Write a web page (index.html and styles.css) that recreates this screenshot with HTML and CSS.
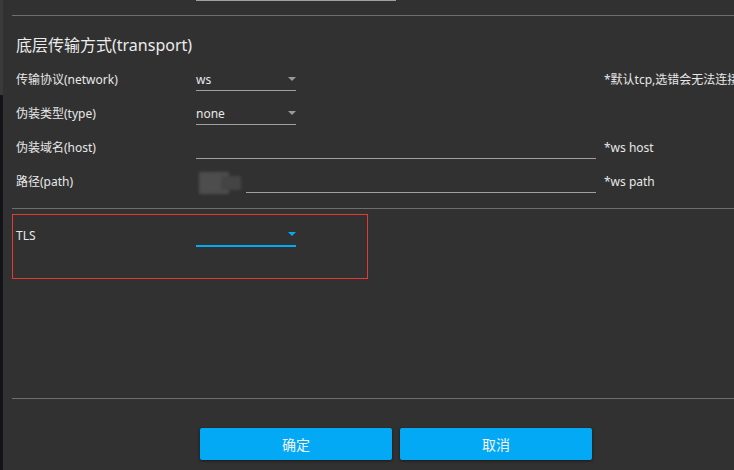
FILE: index.html
```html
<!DOCTYPE html>
<html lang="zh-CN">
<head>
<meta charset="utf-8">
<title>transport</title>
<link rel="stylesheet" href="styles.css">
</head>
<body>
<div class="page">
  <div class="bg-strip"><div class="bg-top"></div><div class="bg-bottom"></div></div>
  <main class="dialog">
    <div class="prev-input"></div>
    <hr class="sep sep-top">
    <h2 class="title">底层传输方式(transport)</h2>

    <div class="row">
      <span class="label">传输协议(network)</span>
      <div class="control">
        <div class="select"><span class="value">ws</span><span class="arrow"></span></div>
      </div>
      <span class="note">*默认tcp,选错会无法连接</span>
    </div>
    <div class="row">
      <span class="label">伪装类型(type)</span>
      <div class="control">
        <div class="select"><span class="value">none</span><span class="arrow"></span></div>
      </div>
    </div>
    <div class="row">
      <span class="label">伪装域名(host)</span>
      <div class="control">
        <div class="input wide"></div>
      </div>
      <span class="note">*ws host</span>
    </div>
    <div class="row">
      <span class="label">路径(path)</span>
      <div class="control">
        <div class="blur"><span class="b1"></span><span class="b2"></span></div>
        <div class="input narrow"></div>
      </div>
      <span class="note">*ws path</span>
    </div>

    <hr class="sep sep-mid">

    <div class="tls-box">
      <div class="row">
        <span class="label">TLS</span>
        <div class="select focused"><span class="value"></span><span class="arrow"></span></div>
      </div>
    </div>

    <hr class="sep sep-bottom">

    <div class="actions">
      <button class="btn">确定</button>
      <button class="btn">取消</button>
    </div>
  </main>
</div>
</body>
</html>
```
FILE: styles.css
```css
html, body {
  margin: 0;
  padding: 0;
  background: #313131;
  overflow: hidden;
}
body {
  width: 734px;
  height: 470px;
  font-family: "Noto Sans", "Noto Sans CJK SC", sans-serif;
  color: #e8e8e8;
  font-size: 12px;
}
.page {
  display: flex;
  height: 470px;
}
.bg-strip {
  width: 3px;
  display: flex;
  flex-direction: column;
  flex-shrink: 0;
}
.bg-top {
  height: 95px;
  background: #3a3a3a;
}
.bg-bottom {
  flex: 1;
  background: #121418;
}
.dialog {
  flex: 1;
  padding-left: 9px;
  min-width: 0;
}
.prev-input {
  margin-left: 184px;
  width: 200px;
  height: 1px;
  background: #a0a0a0;
}
.sep {
  border: 0;
  height: 1px;
  background: #6e6e6e;
  margin: 0;
}
.sep-top { margin-top: 14px; }
.sep-mid { margin-top: 5px; }
.sep-bottom { margin-top: 119px; }
.title {
  margin: 17px 0 10px 4px;
  font-size: 16px;
  font-weight: normal;
  line-height: 24px;
  color: #ececec;
}
.row {
  display: flex;
  align-items: flex-start;
  height: 34px;
  padding-left: 4px;
  white-space: nowrap;
}
.label {
  width: 180px;
  flex-shrink: 0;
  line-height: 24px;
  padding-top: 1px;
}
.control {
  width: 400px;
  flex-shrink: 0;
  display: flex;
  align-items: flex-start;
}
.select {
  width: 100px;
  height: 23px;
  border-bottom: 1px solid #a0a0a0;
  display: flex;
  align-items: flex-start;
  justify-content: space-between;
  box-sizing: content-box;
  flex-shrink: 0;
}
.select .value {
  line-height: 24px;
  padding-top: 1px;
}
.arrow {
  width: 0;
  height: 0;
  border-left: 4px solid transparent;
  border-right: 4px solid transparent;
  border-top: 4px solid #9a9a9a;
  margin-top: 10px;
}
.select.focused {
  height: 22px;
  border-bottom: 2px solid #03a9f4;
}
.select.focused .arrow {
  border-top-color: #03a9f4;
  margin-top: 9px;
}
.input {
  height: 23px;
  border-bottom: 1px solid #a0a0a0;
  flex-shrink: 0;
}
.input.wide { width: 400px; }
.input.narrow { width: 350px; }
.blur {
  width: 50px;
  height: 24px;
  position: relative;
  flex-shrink: 0;
  margin-left: -1px;
  margin-right: 1px;
  margin-top: 1px;
  filter: blur(1.5px);
}
.blur .b1 {
  position: absolute;
  left: 4px; top: 2px;
  width: 30px; height: 22px;
  background: #4d4d4d;
}
.blur .b2 {
  position: absolute;
  left: 26px; top: 6px;
  width: 20px; height: 14px;
  background: #444;
}
.note {
  margin-left: 8px;
  line-height: 24px;
  padding-top: 1px;
}
.tls-box {
  margin-top: 5px;
  width: 356px;
  height: 65px;
  border: 1px solid #e53935;
  padding-top: 8px;
  box-sizing: border-box;
}
.tls-box .row {
  padding-left: 3px;
}
.actions {
  display: flex;
  gap: 8px;
  margin-top: 29px;
  margin-left: 188px;
}
.btn {
  width: 192px;
  height: 32px;
  border: 0;
  border-radius: 2px;
  background: #03a9f4;
  color: #f4f4f4;
  font-family: "Noto Sans", "Noto Sans CJK SC", sans-serif;
  font-size: 14px;
  box-shadow: 0 1px 3px rgba(0,0,0,0.5);
  padding: 0;
}
```
